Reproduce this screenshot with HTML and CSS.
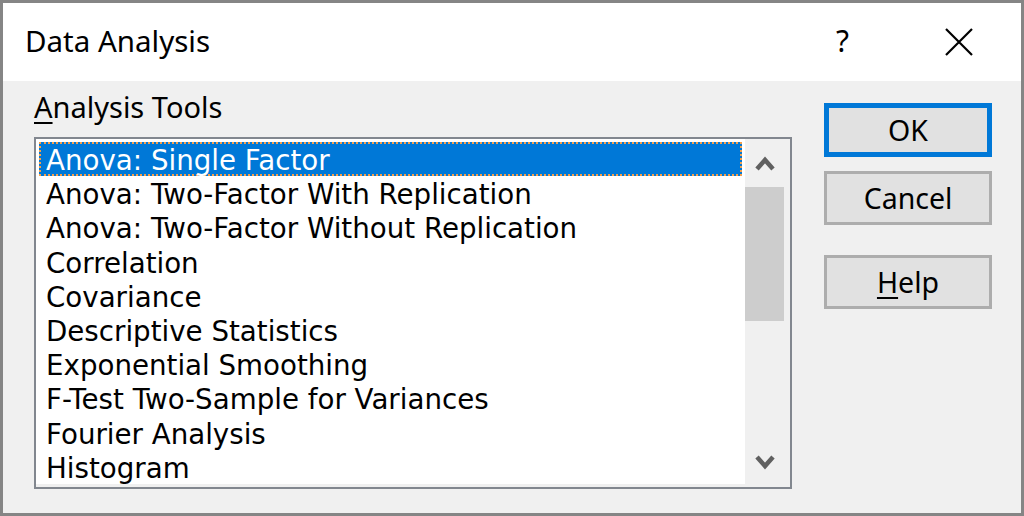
FILE: index.html
```html
<!DOCTYPE html>
<html lang="en">
<head>
  <meta charset="UTF-8">
  <title>Data Analysis</title>
  <link rel="stylesheet" href="styles.css">
</head>
<body>
  <div class="window">
    <div class="titlebar">
      <div class="title">Data Analysis</div>
      <div class="title-buttons">
        <span class="help-btn">?</span>
        <span class="close-btn">
          <svg width="28" height="28" viewBox="0 0 28 28">
            <path d="M1 1 L27 27 M27 1 L1 27" stroke="#000" stroke-width="2.2" fill="none"/>
          </svg>
        </span>
      </div>
    </div>

    <div class="content">
      <div class="left">
        <div class="label"><u>A</u>nalysis Tools</div>
        <div class="listbox">
          <div class="items">
            <div class="item selected">Anova: Single Factor</div>
            <div class="item">Anova: Two-Factor With Replication</div>
            <div class="item">Anova: Two-Factor Without Replication</div>
            <div class="item">Correlation</div>
            <div class="item">Covariance</div>
            <div class="item">Descriptive Statistics</div>
            <div class="item">Exponential Smoothing</div>
            <div class="item">F-Test Two-Sample for Variances</div>
            <div class="item">Fourier Analysis</div>
            <div class="item">Histogram</div>
          </div>
          <div class="scrollbar">
            <div class="arrow">
              <svg width="20" height="16" viewBox="0 0 20 16">
                <path d="M2 14 L10 5 L18 14" stroke="#606060" stroke-width="4.5" fill="none"/>
              </svg>
            </div>
            <div class="thumb"></div>
            <div class="track"></div>
            <div class="arrow">
              <svg width="20" height="16" viewBox="0 0 20 16">
                <path d="M2 2 L10 11 L18 2" stroke="#606060" stroke-width="4.5" fill="none"/>
              </svg>
            </div>
          </div>
        </div>
      </div>

      <div class="buttons">
        <button class="btn default">OK</button>
        <button class="btn">Cancel</button>
        <button class="btn help"><u>H</u>elp</button>
      </div>
    </div>
  </div>
</body>
</html>
```

FILE: styles.css
```css
html, body {
  margin: 0;
  padding: 0;
}
body {
  font-family: "Noto Sans", "Open Sans", sans-serif;
  color: #000;
}
.window {
  width: 1024px;
  height: 516px;
  box-sizing: border-box;
  border: 3px solid #858585;
  display: flex;
  flex-direction: column;
  background-color: #f0f0f0;
}
.titlebar {
  height: 78px;
  background-color: #fff;
  display: flex;
  align-items: center;
  justify-content: space-between;
  padding: 0 48px 0 22px;
  flex-shrink: 0;
}
.title {
  font-size: 29.5px;
  margin-top: -4px;
}
.title-buttons {
  display: flex;
  align-items: center;
  gap: 96px;
}
.help-btn {
  font-size: 30px;
  margin-top: -4px;
}
.close-btn svg {
  display: block;
  margin-top: -1px;
}
.content {
  flex: 1;
  display: flex;
  padding: 0 29px 0 31px;
  gap: 32px;
}
.left {
  width: 758px;
  display: flex;
  flex-direction: column;
}
.label {
  font-size: 29px;
  height: 56px;
  line-height: 52px;
}
.label u {
  text-underline-offset: 4px;
}
.listbox {
  height: 352px;
  box-sizing: border-box;
  border: 2px solid #82878f;
  display: flex;
  background-color: #f0f0f0;
}
.items {
  width: 709px;
  height: 345px;
  box-sizing: border-box;
  background-color: #fff;
  padding: 3px 3px 0 3px;
  overflow: hidden;
  font-family: "DejaVu Sans", sans-serif;
  font-size: 27.7px;
}
.item {
  height: 34.2px;
  line-height: 38px;
  padding-left: 7px;
  box-sizing: border-box;
  white-space: nowrap;
}
.item.selected {
  background-color: #0078d7;
  color: #fff;
  border: 2px dotted #f5a04c;
  padding-left: 5px;
  line-height: 34px;
}
.scrollbar {
  width: 45px;
  display: flex;
  flex-direction: column;
}
.arrow {
  width: 39px;
  height: 48px;
  display: flex;
  align-items: center;
  justify-content: center;
}
.thumb {
  width: 39px;
  height: 134px;
  background-color: #cdcdcd;
}
.track {
  flex: 1;
}
.buttons {
  width: 168px;
  padding-top: 22px;
  display: flex;
  flex-direction: column;
}
.btn {
  height: 54px;
  width: 168px;
  box-sizing: border-box;
  border: 3px solid #adadad;
  background-color: #e1e1e1;
  font-family: "Noto Sans", "Open Sans", sans-serif;
  font-size: 28.5px;
  color: #000;
  padding: 0;
  margin-bottom: 14px;
}
.btn.default {
  border: 5px solid #0078d7;
}
.btn.help {
  margin-top: 16px;
}
.btn u {
  text-underline-offset: 4px;
}
```
